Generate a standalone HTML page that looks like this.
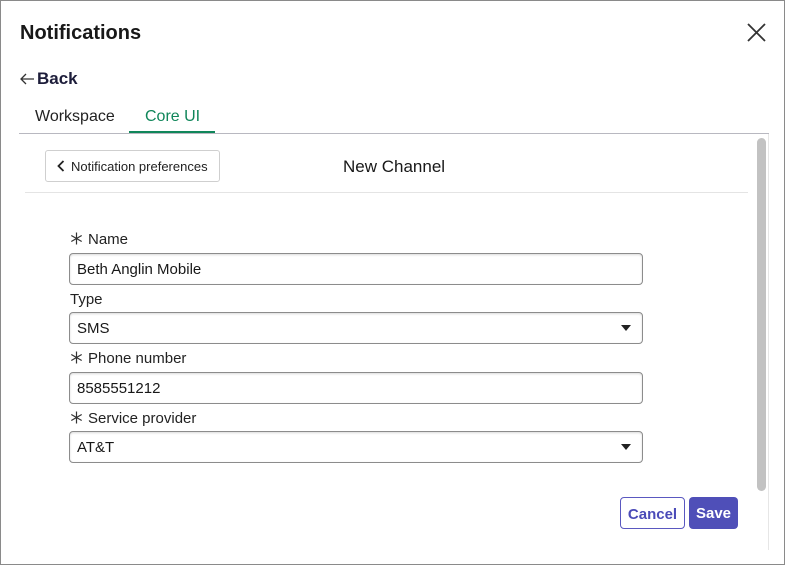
<!DOCTYPE html>
<html><head><style>
*{box-sizing:border-box;margin:0;padding:0}
body{width:785px;height:565px;background:#fff;font-family:"Liberation Sans",sans-serif;color:#181818;position:relative;overflow:hidden}
.frame{position:absolute;left:0;top:0;width:785px;height:565px;border:1px solid #8a8a8a}
.abs{position:absolute}
.lbl{position:absolute;left:70px;font-size:15px;color:#222}
.ast{display:inline-block;vertical-align:-1px;margin-right:5px}
.inp{position:absolute;left:69px;width:574px;height:32px;border:1px solid #8c8c8c;border-radius:4px;font-size:15px;padding:7px 0 0 7px;color:#181818;box-shadow:inset 0 1px 2px rgba(0,0,0,.15)}
.arr{position:absolute;right:11px;top:12px;width:0;height:0;border-left:5px solid transparent;border-right:5px solid transparent;border-top:6px solid #222}
</style></head><body>
<div class="frame"></div>
<div class="abs" style="left:20px;top:22px;font-size:20px;font-weight:bold;color:#181818">Notifications</div>
<svg class="abs" style="left:747px;top:23px" width="19" height="19" viewBox="0 0 19 19"><path d="M1 1L18 18M18 1L1 18" stroke="#333" stroke-width="1.8"/></svg>
<svg class="abs" style="left:19px;top:72px" width="16" height="14" viewBox="0 0 16 14"><path d="M15 7H2M7 2L2 7L7 12" stroke="#333" stroke-width="1.3" fill="none"/></svg>
<div class="abs" style="left:37px;top:69px;font-size:17px;font-weight:bold;color:#1d1d3a">Back</div>
<div class="abs" style="left:35px;top:108px;font-size:16px;color:#222">Workspace</div>
<div class="abs" style="left:145px;top:108px;font-size:16px;color:#10865a">Core UI</div>
<div class="abs" style="left:19px;top:133px;width:750px;height:1px;background:#b8b8c0"></div>
<div class="abs" style="left:129px;top:131px;width:86px;height:2px;background:#10865a"></div>
<div class="abs" style="left:768px;top:134px;width:1px;height:416px;background:#e6e6e6"></div>
<div class="abs" style="left:757px;top:138px;width:9px;height:353px;border-radius:5px;background:#c2c2c2"></div>
<div class="abs" style="left:45px;top:150px;width:175px;height:32px;border:1px solid #cfcfcf;border-radius:3px;font-size:13px;padding:8px 0 0 25px;color:#222">Notification preferences</div>
<svg class="abs" style="left:57px;top:160px" width="8" height="12" viewBox="0 0 8 12"><path d="M6.5 1L1.5 6L6.5 11" stroke="#222" stroke-width="1.8" fill="none"/></svg>
<div class="abs" style="left:343px;top:157px;font-size:17px;color:#181818">New Channel</div>
<div class="abs" style="left:25px;top:192px;width:723px;height:1px;background:#e4e4e4"></div>

<div class="lbl" style="top:231px"><svg class="ast" width="13" height="13" viewBox="0 0 13 13"><path d="M6.5 0.5V12.5M1.3 3.5L11.7 9.5M11.7 3.5L1.3 9.5" stroke="#333" stroke-width="1.2"/></svg>Name</div>
<div class="inp" style="top:253px">Beth Anglin Mobile</div>
<div class="lbl" style="top:291px">Type</div>
<div class="inp" style="top:312px">SMS<div class="arr"></div></div>
<div class="lbl" style="top:350px"><svg class="ast" width="13" height="13" viewBox="0 0 13 13"><path d="M6.5 0.5V12.5M1.3 3.5L11.7 9.5M11.7 3.5L1.3 9.5" stroke="#333" stroke-width="1.2"/></svg>Phone number</div>
<div class="inp" style="top:372px">8585551212</div>
<div class="lbl" style="top:410px"><svg class="ast" width="13" height="13" viewBox="0 0 13 13"><path d="M6.5 0.5V12.5M1.3 3.5L11.7 9.5M11.7 3.5L1.3 9.5" stroke="#333" stroke-width="1.2"/></svg>Service provider</div>
<div class="inp" style="top:431px">AT&amp;T<div class="arr"></div></div>

<div class="abs" style="left:620px;top:497px;width:65px;height:32px;border:1px solid #5a58c0;border-radius:4px;font-size:15px;font-weight:bold;color:#4b4bb8;text-align:center;padding-top:8px">Cancel</div>
<div class="abs" style="left:689px;top:497px;width:49px;height:32px;background:#4f4fb8;border-radius:4px;font-size:15px;font-weight:bold;color:#fff;text-align:center;padding-top:8px">Save</div>
</body></html>
